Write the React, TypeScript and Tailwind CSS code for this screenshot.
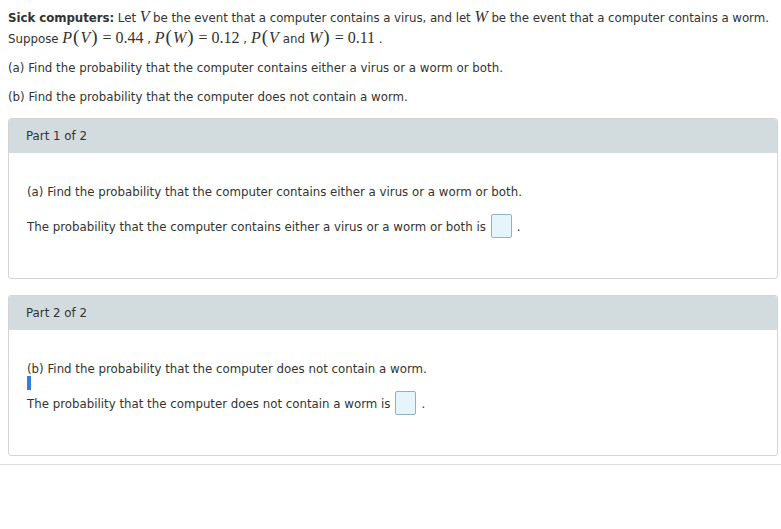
import React from "react";

const M = ({ children }: { children: React.ReactNode }) => (
  <span className="font-['Liberation_Serif',serif] text-[16px]">{children}</span>
);
const I = ({ children }: { children: React.ReactNode }) => (
  <span className="italic">{children}</span>
);
const Paren = ({ children }: { children: React.ReactNode }) => (
  <span className="text-[19px] leading-[16px] px-[1px]">{children}</span>
);

const Box = () => (
  <span className="inline-block align-middle w-[21px] h-[24px] border border-[#8fb1c2] bg-[#e6f5fb] rounded-[2px] mx-[5px] -mt-[3px]" />
);

export default function App() {
  return (
    <div className="w-[781px] h-[529px] bg-white text-[#333] font-['DejaVu_Sans',sans-serif] text-[11.8px] overflow-hidden">
      <div className="px-2 pt-[7px]">
        <p className="leading-[20px] whitespace-nowrap tracking-[-0.05px]">
          <b>Sick computers:</b> Let <M><I>V</I></M> be the event that a computer contains a virus, and let <M><I>W</I></M> be the event that a computer contains a worm.
        </p>
        <p className="leading-[20px] whitespace-nowrap">
          Suppose <M><I>P</I><Paren>(</Paren><I>V</I><Paren>)</Paren> = 0.44</M> , <M><I>P</I><Paren>(</Paren><I>W</I><Paren>)</Paren> = 0.12</M> , <M><I>P</I><Paren>(</Paren><I>V</I> <span className="font-['DejaVu_Sans',sans-serif] text-[11.8px]">and</span> <I>W</I><Paren>)</Paren> = 0.11</M> .
        </p>
        <p className="leading-[20px] mt-[9px]">(a) Find the probability that the computer contains either a virus or a worm or both.</p>
        <p className="leading-[20px] mt-[9px]">(b) Find the probability that the computer does not contain a worm.</p>
      </div>

      <div className="pl-2 mt-[11px] flex flex-col gap-[16px]">
        <div className="w-[770px] border border-[#d4d4d4] rounded-[3px] h-[161px] flex flex-col">
          <div className="bg-[#d2dbde] h-[34px] flex items-center px-[17px] pt-[2px] rounded-t-[3px]">Part 1 of 2</div>
          <div className="px-[18px] pt-[29px]">
            <p className="leading-[20px]">(a) Find the probability that the computer contains either a virus or a worm or both.</p>
            <p className="leading-[24px] mt-[13px]">
              The probability that the computer contains either a virus or a worm or both is<Box />.
            </p>
          </div>
        </div>

        <div className="w-[770px] border border-[#d4d4d4] rounded-[3px] h-[161px] flex flex-col">
          <div className="bg-[#d2dbde] h-[34px] flex items-center px-[17px] pt-[2px] rounded-t-[3px]">Part 2 of 2</div>
          <div className="px-[18px] pt-[29px]">
            <p className="leading-[20px] relative">
              (b) Find the probability that the computer does not contain a worm.
              <span className="absolute left-0 top-[17px] w-[4px] h-[14px] bg-[#2f80e0]" />
            </p>
            <p className="leading-[24px] mt-[13px]">
              The probability that the computer does not contain a worm is<Box />.
            </p>
          </div>
        </div>
      </div>
      <div className="mt-[8px] border-t border-[#dcdcdc]" />
    </div>
  );
}
